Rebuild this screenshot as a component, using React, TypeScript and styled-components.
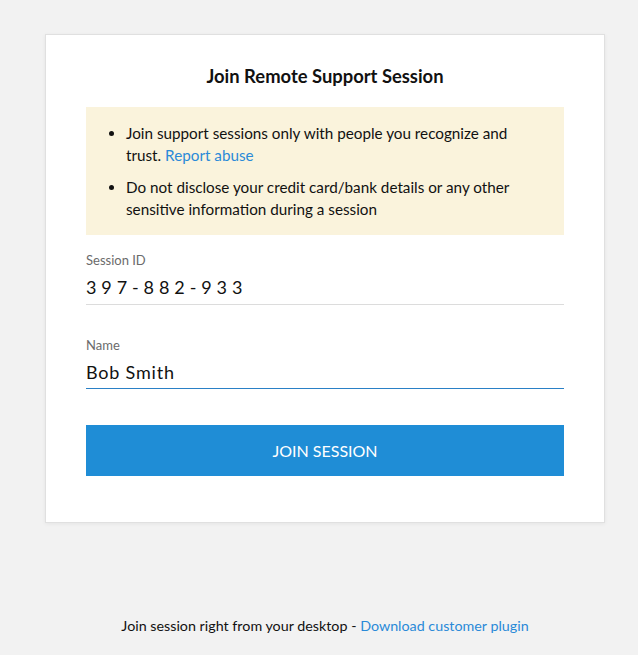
import styled, { createGlobalStyle } from "styled-components";

const GlobalStyle = createGlobalStyle`
  html, body {
    margin: 0;
    padding: 0;
    background: #f2f2f2;
    font-family: Lato, "Liberation Sans", sans-serif;
    color: #111;
  }
`;

const Page = styled.div`
  width: 560px;
  padding: 34px 0 0 45px;
`;

const Card = styled.section`
  background: #fff;
  border: 1px solid #e0e0e0;
  box-shadow: 0 1px 4px rgba(0, 0, 0, 0.06);
  padding: 29px 40px 46px;
  box-sizing: border-box;
`;

const Title = styled.h1`
  margin: 0 0 19px;
  font-size: 18.4px;
  line-height: 24px;
  font-weight: 700;
  text-align: center;
  color: #111;
`;

const Notice = styled.ul`
  margin: 0;
  background: #faf3dc;
  padding: 15px 30px 15px 40px;
  list-style: disc;
`;

const NoticeItem = styled.li`
  font-size: 15.25px;
  line-height: 22px;
  color: #111;
  & + & {
    margin-top: 10px;
  }
`;

const Link = styled.a`
  color: #2a8ad8;
  text-decoration: none;
`;

const Field = styled.label<{ $focused?: boolean }>`
  display: block;
  margin-top: ${(p) => (p.$focused ? "31px" : "16px")};
  border-bottom: 1px solid ${(p) => (p.$focused ? "#2a80c6" : "#dcdcdc")};
  padding-bottom: ${(p) => (p.$focused ? "4px" : "5px")};
`;

const FieldLabel = styled.span`
  display: block;
  font-size: 13px;
  line-height: 18px;
  color: #6b6b6b;
`;

const FieldValue = styled.span<{ $spaced?: boolean }>`
  display: block;
  margin-top: 6px;
  font-size: 18px;
  line-height: 24px;
  color: #111;
  letter-spacing: ${(p) => (p.$spaced ? "4.9px" : "0.8px")};
`;

const JoinButton = styled.button`
  display: block;
  width: 100%;
  margin-top: 36px;
  height: 51px;
  border: none;
  background: #1f8dd6;
  color: #fff;
  font-family: Lato, "Liberation Sans", sans-serif;
  font-size: 16px;
  cursor: pointer;
`;

const Footer = styled.p`
  margin: 93px 0 0;
  text-align: center;
  font-size: 14.3px;
  line-height: 20px;
  color: #111;
`;

export default function App() {
  return (
    <>
      <GlobalStyle />
      <Page>
        <Card>
          <Title>Join Remote Support Session</Title>
          <Notice>
            <NoticeItem>
              Join support sessions only with people you recognize and trust.{" "}
              <Link href="#">Report abuse</Link>
            </NoticeItem>
            <NoticeItem>
              Do not disclose your credit card/bank details or any other
              sensitive information during a session
            </NoticeItem>
          </Notice>
          <Field>
            <FieldLabel>Session ID</FieldLabel>
            <FieldValue $spaced>397-882-933</FieldValue>
          </Field>
          <Field $focused>
            <FieldLabel>Name</FieldLabel>
            <FieldValue>Bob Smith</FieldValue>
          </Field>
          <JoinButton>JOIN SESSION</JoinButton>
        </Card>
        <Footer>
          Join session right from your desktop -{" "}
          <Link href="#">Download customer plugin</Link>
        </Footer>
      </Page>
    </>
  );
}
